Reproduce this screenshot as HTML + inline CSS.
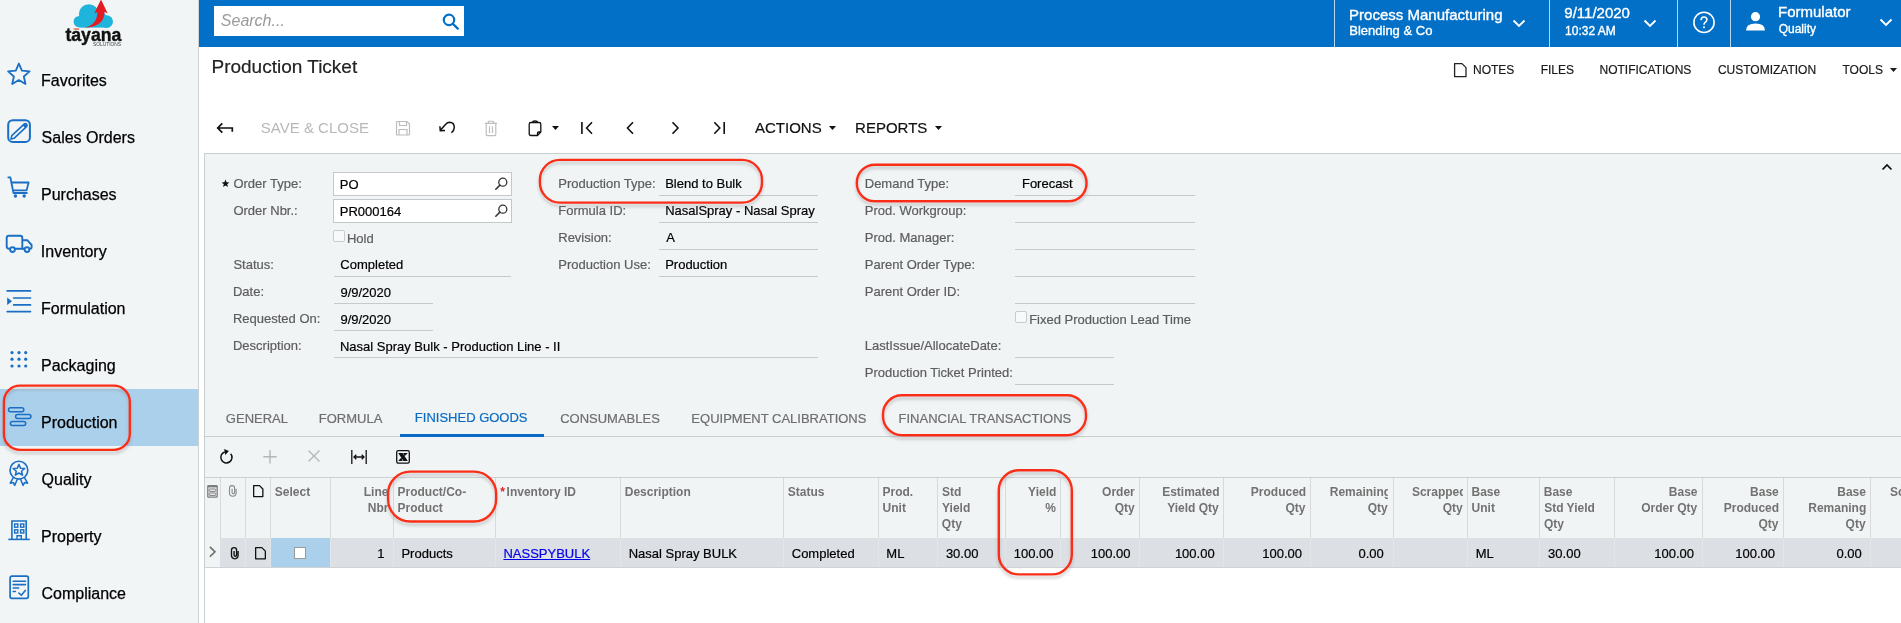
<!DOCTYPE html><html><head><meta charset="utf-8"><style>
html,body{margin:0;padding:0;}
body{width:1901px;height:623px;overflow:hidden;position:relative;background:#fff;font-family:"Liberation Sans",sans-serif;}
.t{position:absolute;white-space:nowrap;line-height:1;}
svg{overflow:visible}
</style></head><body>
<div id="root" style="position:absolute;left:0;top:0;width:1901px;height:623px;will-change:transform"><div style="position:absolute;left:0px;top:0px;width:198px;height:623px;background:#f2f5f6;"></div>
<div style="position:absolute;left:198px;top:0px;width:1px;height:623px;background:#cdd2d5;"></div>
<div style="position:absolute;left:0px;top:389px;width:198px;height:57px;background:#abd0ec;"></div>
<div class="t" style="top:72.96px;font-size:16px;color:#000;left:41.02px;-webkit-text-stroke:0.25px #000;">Favorites</div>
<div class="t" style="top:129.96px;font-size:16px;color:#000;left:41.58px;-webkit-text-stroke:0.25px #000;">Sales Orders</div>
<div class="t" style="top:186.96px;font-size:16px;color:#000;left:41.02px;-webkit-text-stroke:0.25px #000;">Purchases</div>
<div class="t" style="top:243.96px;font-size:16px;color:#000;left:40.86px;-webkit-text-stroke:0.25px #000;">Inventory</div>
<div class="t" style="top:300.96px;font-size:16px;color:#000;left:41.02px;-webkit-text-stroke:0.25px #000;">Formulation</div>
<div class="t" style="top:357.96px;font-size:16px;color:#000;left:41.02px;-webkit-text-stroke:0.25px #000;">Packaging</div>
<div class="t" style="top:414.96px;font-size:16px;color:#000;left:41.02px;-webkit-text-stroke:0.25px #000;">Production</div>
<div class="t" style="top:471.96px;font-size:16px;color:#000;left:41.58px;-webkit-text-stroke:0.25px #000;">Quality</div>
<div class="t" style="top:528.96px;font-size:16px;color:#000;left:41.02px;-webkit-text-stroke:0.25px #000;">Property</div>
<div class="t" style="top:585.96px;font-size:16px;color:#000;left:41.50px;-webkit-text-stroke:0.25px #000;">Compliance</div>
<svg style="position:absolute;left:5px;top:60px" width="28" height="28" viewBox="0 0 28 28"><polygon points="13.85,3.55 16.91,10.64 24.60,11.36 18.80,16.46 20.49,23.99 13.85,20.05 7.21,23.99 8.90,16.46 3.10,11.36 10.79,10.64" fill="none" stroke="#1a6fc4" stroke-width="1.8" stroke-linejoin="round"/></svg>
<svg style="position:absolute;left:5px;top:117px" width="28" height="28" viewBox="0 0 28 28"><rect x="3.2" y="3.2" width="21.7" height="21.7" rx="4.5" fill="none" stroke="#1a6fc4" stroke-width="2"/><g transform="translate(-1.1,1.1)"><path d="M20.2 6.1 Q21.6 5 22.7 6.2 Q23.8 7.4 22.6 8.6 L10.4 20.1 L7 21 L7.9 17.5 Z" fill="none" stroke="#1a6fc4" stroke-width="1.6" stroke-linejoin="round"/><path d="M20.2 6.1 Q21.6 5 22.7 6.2 Q23.8 7.4 22.6 8.6 L21.2 9.9 L18.8 7.4 Z" fill="#1a6fc4"/></g></svg>
<svg style="position:absolute;left:5px;top:174px" width="28" height="28" viewBox="0 0 28 28"><path d="M2.6 3.3 H5.3 L8.5 19 H22.5" fill="none" stroke="#1a6fc4" stroke-width="1.8" stroke-linejoin="round"/><path d="M6.6 8.5 H23.6 L21.6 16.4 H8.2" fill="none" stroke="#1a6fc4" stroke-width="1.8" stroke-linejoin="round"/><circle cx="10.4" cy="22" r="1.7" fill="#1a6fc4"/><circle cx="19.2" cy="22" r="1.7" fill="#1a6fc4"/></svg>
<svg style="position:absolute;left:3px;top:232px" width="32" height="24" viewBox="0 0 32 24"><path d="M8 16.8 H6.2 Q3.7 16.8 3.7 14.3 V6 Q3.7 3.8 6 3.8 H17 Q19.3 3.8 19.3 6 V16.8 H10.8" fill="none" stroke="#1a6fc4" stroke-width="1.9"/><path d="M19.3 8.2 H24.3 L28.6 13 V15.3 Q28.6 16.8 27 16.8 H26.3 M19.3 16.8 H21.8" fill="none" stroke="#1a6fc4" stroke-width="1.9" stroke-linejoin="round"/><circle cx="9.5" cy="17.6" r="2.4" fill="#f2f5f6" stroke="#1a6fc4" stroke-width="1.9"/><circle cx="24" cy="17.6" r="2.4" fill="#f2f5f6" stroke="#1a6fc4" stroke-width="1.9"/></svg>
<svg style="position:absolute;left:5px;top:286px" width="28" height="30" viewBox="0 0 28 30"><path d="M2.2 4.9 H25.5 M8.7 12 H25.5 M8.7 18.9 H25.5 M2.2 25.6 H25.5" stroke="#1a6fc4" stroke-width="1.7" stroke-linecap="round"/><polygon points="2.2,11.5 7,15.3 2.2,19.1" fill="#1a6fc4"/></svg>
<svg style="position:absolute;left:5px;top:348px" width="28" height="24" viewBox="0 0 28 24"><circle cx="7" cy="4.6" r="1.6" fill="#1a6fc4"/><circle cx="7" cy="11.2" r="1.6" fill="#1a6fc4"/><circle cx="7" cy="18" r="1.6" fill="#1a6fc4"/><circle cx="14" cy="4.6" r="1.6" fill="#1a6fc4"/><circle cx="14" cy="11.2" r="1.6" fill="#1a6fc4"/><circle cx="14" cy="18" r="1.6" fill="#1a6fc4"/><circle cx="20.7" cy="4.6" r="1.6" fill="#1a6fc4"/><circle cx="20.7" cy="11.2" r="1.6" fill="#1a6fc4"/><circle cx="20.7" cy="18" r="1.6" fill="#1a6fc4"/></svg>
<svg style="position:absolute;left:5px;top:404px" width="30" height="26" viewBox="0 0 30 26"><rect x="3.5" y="3.8" width="15.3" height="3.9" rx="1.95" fill="none" stroke="#1a6fc4" stroke-width="1.5"/><rect x="10.6" y="10.5" width="15.3" height="3.9" rx="1.95" fill="none" stroke="#1a6fc4" stroke-width="1.5"/><rect x="5.4" y="17.6" width="15.3" height="3.9" rx="1.95" fill="none" stroke="#1a6fc4" stroke-width="1.5"/></svg>
<svg style="position:absolute;left:5px;top:457px" width="28" height="32" viewBox="0 0 28 32"><circle cx="13.9" cy="13.2" r="8.9" fill="none" stroke="#1a6fc4" stroke-width="1.6"/><polygon points="13.9,7.4 15.5,11.3 19.7,11.5 16.5,14.2 17.5,18.2 13.9,16 10.3,18.2 11.3,14.2 8.1,11.5 12.3,11.3" fill="none" stroke="#1a6fc4" stroke-width="1.5" stroke-linejoin="round"/><path d="M8.6 20.2 L5.2 26.2 L8.3 25.6 L9.7 28.4 L12.3 22.2 M19.2 20.2 L22.6 26.2 L19.5 25.6 L18.1 28.4 L15.5 22.2" fill="none" stroke="#1a6fc4" stroke-width="1.5" stroke-linejoin="round"/></svg>
<svg style="position:absolute;left:5px;top:516px" width="28" height="28" viewBox="0 0 28 28"><path d="M6.9 23.3 V5 H21.2 V23.3" fill="none" stroke="#1a6fc4" stroke-width="1.6"/><path d="M3.3 23.4 H24.8" stroke="#1a6fc4" stroke-width="1.6"/><rect x="9.6" y="8" width="3.2" height="3.2" fill="none" stroke="#1a6fc4" stroke-width="1.4"/><rect x="15.6" y="8" width="3.2" height="3.2" fill="none" stroke="#1a6fc4" stroke-width="1.4"/><rect x="9.6" y="13.8" width="3.2" height="3.2" fill="none" stroke="#1a6fc4" stroke-width="1.4"/><rect x="15.6" y="13.8" width="3.2" height="3.2" fill="none" stroke="#1a6fc4" stroke-width="1.4"/><path d="M12 23.3 V19.7 H16.3 V23.3" fill="none" stroke="#1a6fc4" stroke-width="1.4"/></svg>
<svg style="position:absolute;left:5px;top:572px" width="28" height="30" viewBox="0 0 28 30"><rect x="5.1" y="4.1" width="18.2" height="22.2" rx="1.8" fill="none" stroke="#1a6fc4" stroke-width="1.7"/><path d="M8.2 9.3 H20.5 M8.2 12.6 H20.5 M8.2 16 H13.6 M8.2 19.5 H10.4" stroke="#1a6fc4" stroke-width="1.6" stroke-linecap="round"/><path d="M13.8 21 L16.3 23.2 L20.3 18.4" fill="none" stroke="#1a6fc4" stroke-width="1.6" stroke-linecap="round" stroke-linejoin="round"/></svg>
<svg style="position:absolute;left:60px;top:0px" width="70" height="48" viewBox="0 0 70 48">
<g fill="#1fb4dc"><circle cx="28.8" cy="14.1" r="9.9"/><circle cx="19.3" cy="21.6" r="5.7"/><circle cx="46.7" cy="21.6" r="6.3"/><circle cx="39" cy="17.5" r="7"/><rect x="19.3" y="15.6" width="27.4" height="12"/></g>
<path d="M41 -0.5 L47.6 13.2 L44.4 12 Q45 26.5 24.2 27.9 Q37.2 24.8 37.4 12.2 L34.4 12.9 Z" fill="#e31b23"/>
<rect x="13.7" y="28.4" width="5.4" height="1.3" fill="#e0523a"/>
<text x="5.4" y="41.2" font-family="Liberation Sans" font-weight="bold" font-size="18.3" textLength="56" lengthAdjust="spacingAndGlyphs" fill="#111" stroke="#111" stroke-width="0.4">tayana</text>
<text x="33" y="45.5" font-family="Liberation Sans" font-size="4.6" textLength="28" lengthAdjust="spacingAndGlyphs" fill="#444">SOLUTIONS</text>
</svg>
<div style="position:absolute;left:199px;top:0px;width:1702px;height:47px;background:#0370c8;"></div>
<div style="position:absolute;left:214px;top:6px;width:250px;height:30px;background:#fff;"></div>
<div class="t" style="top:12.96px;font-size:16px;color:#9a9a9a;font-style:italic;left:220.82px;">Search...</div>
<svg style="position:absolute;left:441px;top:12px" width="22" height="22" viewBox="0 0 22 22"><circle cx="8" cy="7.9" r="5.2" fill="none" stroke="#0370c8" stroke-width="2.2"/><path d="M11.8 11.7 L16.8 16.6" stroke="#0370c8" stroke-width="2.3" stroke-linecap="round"/></svg>
<div style="position:absolute;left:1334px;top:0px;width:1px;height:47px;background:#b9d4ef;"></div>
<div style="position:absolute;left:1549px;top:0px;width:1px;height:47px;background:#b9d4ef;"></div>
<div style="position:absolute;left:1677px;top:0px;width:1px;height:47px;background:#b9d4ef;"></div>
<div style="position:absolute;left:1730px;top:0px;width:1px;height:47px;background:#b9d4ef;"></div>
<div class="t" style="top:6.90px;font-size:15px;color:#fff;left:1349.10px;-webkit-text-stroke:0.35px #fff;">Process Manufacturing</div>
<div class="t" style="top:24.10px;font-size:13px;color:#fff;left:1349.26px;-webkit-text-stroke:0.35px #fff;">Blending &amp; Co</div>
<svg style="position:absolute;left:1511.5px;top:19px" width="15" height="10" viewBox="0 0 15 10"><path d="M1.5 1.5 L7 7 L12.5 1.5" fill="none" stroke="#fff" stroke-width="1.9"/></svg>
<div class="t" style="top:5.20px;font-size:15px;color:#fff;left:1564.33px;-webkit-text-stroke:0.35px #fff;">9/11/2020</div>
<div class="t" style="top:24.54px;font-size:12px;color:#fff;left:1565.10px;-webkit-text-stroke:0.35px #fff;">10:32 AM</div>
<svg style="position:absolute;left:1643px;top:19px" width="15" height="10" viewBox="0 0 15 10"><path d="M1.5 1.5 L7 7 L12.5 1.5" fill="none" stroke="#fff" stroke-width="1.9"/></svg>
<svg style="position:absolute;left:1692px;top:11px" width="24" height="24" viewBox="0 0 24 24"><circle cx="12" cy="11.4" r="10.1" fill="none" stroke="#fff" stroke-width="1.6"/><path d="M9.1 9.2 Q9.1 6 12 6 Q14.9 6 14.9 8.8 Q14.9 10.4 13.2 11.4 Q12 12.1 12 13.8" fill="none" stroke="#fff" stroke-width="1.6"/><circle cx="12" cy="16.3" r="1" fill="#fff"/></svg>
<svg style="position:absolute;left:1744px;top:10px" width="24" height="24" viewBox="0 0 24 24"><circle cx="11.5" cy="6.7" r="4.6" fill="#fff"/><path d="M2 20.4 Q2 13.6 11.5 13.6 Q21 13.6 21 20.4 Z" fill="#fff"/></svg>
<div class="t" style="top:4.00px;font-size:15px;color:#fff;left:1778.00px;-webkit-text-stroke:0.35px #fff;">Formulator</div>
<div class="t" style="top:23.14px;font-size:12px;color:#fff;left:1778.66px;-webkit-text-stroke:0.35px #fff;">Quality</div>
<svg style="position:absolute;left:1879px;top:18px" width="15" height="10" viewBox="0 0 15 10"><path d="M1.5 1.5 L7 7 L12.5 1.5" fill="none" stroke="#fff" stroke-width="1.9"/></svg>
<div class="t" style="top:56.82px;font-size:19px;color:#222;-webkit-text-stroke:0.2px #222;left:211.48px;">Production Ticket</div>
<svg style="position:absolute;left:1452px;top:61px" width="17" height="18" viewBox="0 0 17 18"><path d="M2.6 2.6 H10 L14 6.6 V15.7 H2.6 Z" fill="none" stroke="#222" stroke-width="1.3" stroke-linejoin="round"/></svg>
<div class="t" style="top:63.74px;font-size:12px;color:#1a1a1a;-webkit-text-stroke:0.2px #1a1a1a;left:1473.04px;">NOTES</div>
<div class="t" style="top:63.74px;font-size:12px;color:#1a1a1a;-webkit-text-stroke:0.2px #1a1a1a;left:1540.64px;">FILES</div>
<div class="t" style="top:63.74px;font-size:12px;color:#1a1a1a;-webkit-text-stroke:0.2px #1a1a1a;left:1599.54px;">NOTIFICATIONS</div>
<div class="t" style="top:63.74px;font-size:12px;color:#1a1a1a;-webkit-text-stroke:0.2px #1a1a1a;left:1717.90px;">CUSTOMIZATION</div>
<div class="t" style="top:63.74px;font-size:12px;color:#1a1a1a;-webkit-text-stroke:0.2px #1a1a1a;left:1842.46px;">TOOLS</div>
<svg style="position:absolute;left:1890px;top:68px" width="8" height="5" viewBox="0 0 8 5"><polygon points="0,0 7,0 3.5,4" fill="#1a1a1a"/></svg>
<svg style="position:absolute;left:215px;top:120px" width="20" height="16" viewBox="0 0 20 16"><path d="M2.8 8 H17.3 V11.8 M7.3 3.4 L2.7 8 L7.3 12.6" fill="none" stroke="#111" stroke-width="1.7"/></svg>
<div class="t" style="top:120.20px;font-size:15px;color:#b8b8b8;left:260.82px;">SAVE &amp; CLOSE</div>
<svg style="position:absolute;left:394px;top:119px" width="18" height="18" viewBox="0 0 18 18"><path d="M2.5 3.5 Q2.5 2.5 3.5 2.5 H13 L15.5 5 V15 Q15.5 16 14.5 16 H3.5 Q2.5 16 2.5 15 Z" fill="none" stroke="#bdbdbd" stroke-width="1.2"/><path d="M5.5 2.5 V6.5 H12.5 V2.5 M5 16 V10.5 H13 V16" fill="none" stroke="#bdbdbd" stroke-width="1.2"/></svg>
<svg style="position:absolute;left:437px;top:119px" width="20" height="17" viewBox="0 0 20 17"><path d="M2.9 7.2 L3.3 11.6 L8 11.4" fill="none" stroke="#111" stroke-width="1.5" stroke-linejoin="miter"/><path d="M3.6 11 L8.5 5.4 Q10.5 3.3 12.5 3.3 Q17.3 3.5 17.3 8.5 Q17.3 11.3 14.4 13.8" fill="none" stroke="#111" stroke-width="1.5"/></svg>
<svg style="position:absolute;left:483px;top:119px" width="16" height="19" viewBox="0 0 16 19"><path d="M2 4.4 H14 M5.3 4.4 V2.6 Q5.3 2.2 5.8 2.2 H10.2 Q10.7 2.2 10.7 2.6 V4.4 M3.2 4.4 V15.6 Q3.2 16.6 4.2 16.6 H11.8 Q12.8 16.6 12.8 15.6 V4.4 M6.5 7.3 V14 M9.5 7.3 V14" fill="none" stroke="#bdbdbd" stroke-width="1.15"/></svg>
<svg style="position:absolute;left:527px;top:119px" width="16" height="19" viewBox="0 0 16 19"><path d="M4 3.5 H12 Q13.8 3.5 13.8 5.3 V13 L10.5 16.5 H4 Q2.2 16.5 2.2 14.7 V5.3 Q2.2 3.5 4 3.5 Z M5.5 3.5 Q5.5 1.8 8 1.8 Q10.5 1.8 10.5 3.5 M13.8 13 H11.5 Q10.5 13 10.5 14 V16.5" fill="none" stroke="#111" stroke-width="1.3" stroke-linejoin="round"/></svg>
<svg style="position:absolute;left:552px;top:126px" width="8" height="5" viewBox="0 0 8 5"><polygon points="0,0 7,0 3.5,4" fill="#111"/></svg>
<svg style="position:absolute;left:579px;top:120px" width="16" height="16" viewBox="0 0 16 16"><path d="M2.9 2 V14 M13 2.2 L7.6 8 L13 13.8" fill="none" stroke="#111" stroke-width="1.6"/></svg>
<svg style="position:absolute;left:624px;top:120px" width="12" height="16" viewBox="0 0 12 16"><path d="M9 2.2 L3.5 8 L9 13.8" fill="none" stroke="#111" stroke-width="1.6"/></svg>
<svg style="position:absolute;left:669px;top:120px" width="12" height="16" viewBox="0 0 12 16"><path d="M3.5 2.2 L9 8 L3.5 13.8" fill="none" stroke="#111" stroke-width="1.6"/></svg>
<svg style="position:absolute;left:712px;top:120px" width="16" height="16" viewBox="0 0 16 16"><path d="M12.2 2 V14 M2.3 2.2 L7.8 8 L2.3 13.8" fill="none" stroke="#111" stroke-width="1.6"/></svg>
<div class="t" style="top:120.10px;font-size:15px;color:#111;-webkit-text-stroke:0.2px #111;left:755.00px;">ACTIONS</div>
<svg style="position:absolute;left:829px;top:126px" width="8" height="5" viewBox="0 0 8 5"><polygon points="0,0 7,0 3.5,4" fill="#111"/></svg>
<div class="t" style="top:120.10px;font-size:15px;color:#111;-webkit-text-stroke:0.2px #111;left:855.10px;">REPORTS</div>
<svg style="position:absolute;left:935px;top:126px" width="8" height="5" viewBox="0 0 8 5"><polygon points="0,0 7,0 3.5,4" fill="#111"/></svg>
<div style="position:absolute;left:204px;top:153px;width:1697px;height:470px;background:#f1f4f5;border-top:1px solid #c9ced1;border-left:1px solid #c9ced1;box-sizing:border-box;"></div>
<svg style="position:absolute;left:1879px;top:161px" width="16" height="12" viewBox="0 0 16 12"><path d="M3.5 8.5 L8 4 L12.5 8.5" fill="none" stroke="#111" stroke-width="1.75"/></svg>
<svg style="position:absolute;left:221px;top:179px" width="9" height="9" viewBox="0 0 9 9"><polygon points="4.5,0.6 5.6,3.3 8.4,3.4 6.2,5.2 7,7.9 4.5,6.4 2,7.9 2.8,5.2 0.6,3.4 3.4,3.3" fill="#111"/></svg>
<div class="t" style="top:177.20px;font-size:13px;color:#5d5d5d;-webkit-text-stroke:0.2px #5d5d5d;left:233.41px;">Order Type:</div>
<div class="t" style="top:204.20px;font-size:13px;color:#5d5d5d;-webkit-text-stroke:0.2px #5d5d5d;left:233.41px;">Order Nbr.:</div>
<div class="t" style="top:258.00px;font-size:13px;color:#5d5d5d;-webkit-text-stroke:0.2px #5d5d5d;left:233.41px;">Status:</div>
<div class="t" style="top:285.00px;font-size:13px;color:#5d5d5d;-webkit-text-stroke:0.2px #5d5d5d;left:232.96px;">Date:</div>
<div class="t" style="top:312.00px;font-size:13px;color:#5d5d5d;-webkit-text-stroke:0.2px #5d5d5d;left:232.96px;">Requested On:</div>
<div class="t" style="top:339.00px;font-size:13px;color:#5d5d5d;-webkit-text-stroke:0.2px #5d5d5d;left:232.96px;">Description:</div>
<div style="position:absolute;left:333px;top:172px;width:179px;height:24px;background:#fff;border:1px solid #c5c8ca;box-sizing:border-box;"></div>
<div style="position:absolute;left:333px;top:199px;width:179px;height:24px;background:#fff;border:1px solid #c5c8ca;box-sizing:border-box;"></div>
<svg style="position:absolute;left:493px;top:176px" width="16" height="16" viewBox="0 0 16 16"><circle cx="9.8" cy="6.2" r="4" fill="none" stroke="#333" stroke-width="1.3"/><path d="M6.9 9.1 L2.8 13.2" stroke="#333" stroke-width="1.5" stroke-linecap="round"/></svg>
<svg style="position:absolute;left:493px;top:203px" width="16" height="16" viewBox="0 0 16 16"><circle cx="9.8" cy="6.2" r="4" fill="none" stroke="#333" stroke-width="1.3"/><path d="M6.9 9.1 L2.8 13.2" stroke="#333" stroke-width="1.5" stroke-linecap="round"/></svg>
<div class="t" style="top:177.50px;font-size:13px;color:#000;-webkit-text-stroke:0.2px #000;left:339.76px;">PO</div>
<div class="t" style="top:204.50px;font-size:13px;color:#000;-webkit-text-stroke:0.2px #000;left:339.76px;">PR000164</div>
<div style="position:absolute;left:333px;top:230px;width:12px;height:12px;background:#f8f9fa;border:1px solid #c9cccf;border-radius:2px;box-sizing:border-box;"></div>
<div class="t" style="top:231.80px;font-size:13px;color:#5d5d5d;-webkit-text-stroke:0.2px #5d5d5d;left:346.96px;">Hold</div>
<div class="t" style="top:258.10px;font-size:13px;color:#000;-webkit-text-stroke:0.2px #000;left:340.35px;">Completed</div>
<div class="t" style="top:286.00px;font-size:13px;color:#000;-webkit-text-stroke:0.2px #000;left:340.42px;">9/9/2020</div>
<div class="t" style="top:313.00px;font-size:13px;color:#000;-webkit-text-stroke:0.2px #000;left:340.42px;">9/9/2020</div>
<div class="t" style="top:340.00px;font-size:13px;color:#000;-webkit-text-stroke:0.2px #000;left:339.96px;">Nasal Spray Bulk - Production Line - II</div>
<div style="position:absolute;left:334px;top:276px;width:177px;height:1px;background:#c6cacd;"></div>
<div style="position:absolute;left:334px;top:303px;width:99px;height:1px;background:#c6cacd;"></div>
<div style="position:absolute;left:334px;top:330px;width:99px;height:1px;background:#c6cacd;"></div>
<div style="position:absolute;left:334px;top:357px;width:484px;height:1px;background:#c6cacd;"></div>
<div class="t" style="top:177.10px;font-size:13px;color:#5d5d5d;-webkit-text-stroke:0.2px #5d5d5d;left:558.26px;">Production Type:</div>
<div class="t" style="top:204.10px;font-size:13px;color:#5d5d5d;-webkit-text-stroke:0.2px #5d5d5d;left:558.26px;">Formula ID:</div>
<div class="t" style="top:231.10px;font-size:13px;color:#5d5d5d;-webkit-text-stroke:0.2px #5d5d5d;left:558.26px;">Revision:</div>
<div class="t" style="top:258.10px;font-size:13px;color:#5d5d5d;-webkit-text-stroke:0.2px #5d5d5d;left:558.26px;">Production Use:</div>
<div class="t" style="top:177.10px;font-size:13px;color:#000;-webkit-text-stroke:0.2px #000;left:665.16px;">Blend to Bulk</div>
<div class="t" style="top:204.10px;font-size:13px;color:#000;-webkit-text-stroke:0.2px #000;left:665.16px;">NasalSpray - Nasal Spray</div>
<div class="t" style="top:231.30px;font-size:13px;color:#000;-webkit-text-stroke:0.2px #000;left:666.20px;">A</div>
<div class="t" style="top:258.10px;font-size:13px;color:#000;-webkit-text-stroke:0.2px #000;left:665.16px;">Production</div>
<div style="position:absolute;left:659px;top:195px;width:159px;height:1px;background:#c6cacd;"></div>
<div style="position:absolute;left:659px;top:222px;width:159px;height:1px;background:#c6cacd;"></div>
<div style="position:absolute;left:659px;top:249px;width:159px;height:1px;background:#c6cacd;"></div>
<div style="position:absolute;left:659px;top:276px;width:159px;height:1px;background:#c6cacd;"></div>
<div class="t" style="top:177.10px;font-size:13px;color:#5d5d5d;-webkit-text-stroke:0.2px #5d5d5d;left:864.76px;">Demand Type:</div>
<div class="t" style="top:204.10px;font-size:13px;color:#5d5d5d;-webkit-text-stroke:0.2px #5d5d5d;left:864.76px;">Prod. Workgroup:</div>
<div class="t" style="top:231.10px;font-size:13px;color:#5d5d5d;-webkit-text-stroke:0.2px #5d5d5d;left:864.76px;">Prod. Manager:</div>
<div class="t" style="top:258.10px;font-size:13px;color:#5d5d5d;-webkit-text-stroke:0.2px #5d5d5d;left:864.76px;">Parent Order Type:</div>
<div class="t" style="top:285.10px;font-size:13px;color:#5d5d5d;-webkit-text-stroke:0.2px #5d5d5d;left:864.76px;">Parent Order ID:</div>
<div class="t" style="top:339.10px;font-size:13px;color:#5d5d5d;-webkit-text-stroke:0.2px #5d5d5d;left:864.76px;">LastIssue/AllocateDate:</div>
<div class="t" style="top:366.10px;font-size:13px;color:#5d5d5d;-webkit-text-stroke:0.2px #5d5d5d;left:864.76px;">Production Ticket Printed:</div>
<div class="t" style="top:177.10px;font-size:13px;color:#000;-webkit-text-stroke:0.2px #000;left:1021.96px;">Forecast</div>
<div style="position:absolute;left:1015px;top:195px;width:180px;height:1px;background:#c6cacd;"></div>
<div style="position:absolute;left:1015px;top:222px;width:180px;height:1px;background:#c6cacd;"></div>
<div style="position:absolute;left:1015px;top:249px;width:180px;height:1px;background:#c6cacd;"></div>
<div style="position:absolute;left:1015px;top:276px;width:180px;height:1px;background:#c6cacd;"></div>
<div style="position:absolute;left:1015px;top:303px;width:180px;height:1px;background:#c6cacd;"></div>
<div style="position:absolute;left:1015px;top:357px;width:99px;height:1px;background:#c6cacd;"></div>
<div style="position:absolute;left:1015px;top:384px;width:99px;height:1px;background:#c6cacd;"></div>
<div style="position:absolute;left:1015px;top:311px;width:12px;height:12px;background:#f8f9fa;border:1px solid #c9cccf;border-radius:2px;box-sizing:border-box;"></div>
<div class="t" style="top:312.80px;font-size:13px;color:#5d5d5d;-webkit-text-stroke:0.2px #5d5d5d;left:1029.16px;">Fixed Production Lead Time</div>
<div style="position:absolute;left:205px;top:436px;width:1696px;height:1px;background:#c9ced1;"></div>
<div class="t" style="top:412.00px;font-size:13px;color:#6e6e6e;-webkit-text-stroke:0.2px #6e6e6e;left:225.85px;">GENERAL</div>
<div class="t" style="top:412.00px;font-size:13px;color:#6e6e6e;-webkit-text-stroke:0.2px #6e6e6e;left:318.76px;">FORMULA</div>
<div class="t" style="top:411.10px;font-size:13px;color:#0b6bc4;-webkit-text-stroke:0.2px #0b6bc4;left:414.86px;">FINISHED GOODS</div>
<div class="t" style="top:412.00px;font-size:13px;color:#6e6e6e;-webkit-text-stroke:0.2px #6e6e6e;left:560.15px;">CONSUMABLES</div>
<div class="t" style="top:412.00px;font-size:13px;color:#6e6e6e;-webkit-text-stroke:0.2px #6e6e6e;left:691.36px;">EQUIPMENT CALIBRATIONS</div>
<div class="t" style="top:412.00px;font-size:13px;color:#6e6e6e;-webkit-text-stroke:0.2px #6e6e6e;left:898.56px;">FINANCIAL TRANSACTIONS</div>
<div style="position:absolute;left:400px;top:434px;width:144px;height:3px;background:#0b6bc4;"></div>
<svg style="position:absolute;left:217px;top:447px" width="20" height="20" viewBox="0 0 20 20"><path d="M13.65 6.65 A5.6 5.6 0 1 1 7.76 4.94" fill="none" stroke="#111" stroke-width="1.5"/><polygon points="7.1,1.9 8.3,7.9 11.9,4.0" fill="#111"/></svg>
<svg style="position:absolute;left:261px;top:448px" width="18" height="18" viewBox="0 0 18 18"><path d="M9 2 V15.5 M2.3 8.7 H15.7" stroke="#b5b5b5" stroke-width="1.4"/></svg>
<svg style="position:absolute;left:306px;top:448px" width="16" height="16" viewBox="0 0 16 16"><path d="M2.5 2.5 L13.5 13.5 M13.5 2.5 L2.5 13.5" stroke="#b5b5b5" stroke-width="1.3"/></svg>
<svg style="position:absolute;left:349px;top:447px" width="20" height="20" viewBox="0 0 20 20"><path d="M2.8 3 V17 M17.2 3 V17 M5 10 H15 M7.3 7.7 L5 10 L7.3 12.3 M12.7 7.7 L15 10 L12.7 12.3" fill="none" stroke="#111" stroke-width="1.3"/></svg>
<svg style="position:absolute;left:394px;top:448px" width="18" height="18" viewBox="0 0 18 18"><rect x="2.7" y="2.6" width="12.6" height="12.6" rx="1.6" fill="none" stroke="#111" stroke-width="1.3"/><polygon points="4.2,5 8.6,5 13.8,12.9 9.4,12.9" fill="#111"/><polygon points="9.2,5 13.8,5 10.6,8.2" fill="#111"/><polygon points="4.2,12.9 8.6,12.9 7.3,9.6" fill="#111"/></svg>
<div style="position:absolute;left:205px;top:477px;width:1696px;height:1px;background:#cdd1d4;"></div>
<div style="position:absolute;left:205px;top:538px;width:1696px;height:30px;background:#dcdfe3;"></div>
<div style="position:absolute;left:205px;top:538px;width:15px;height:29px;background:#f1f4f5;"></div>
<div style="position:absolute;left:270px;top:538px;width:60px;height:29px;background:#abd0ec;"></div>
<div style="position:absolute;left:205px;top:567px;width:1696px;height:1px;background:#d0d3d6;"></div>
<div style="position:absolute;left:205px;top:568px;width:1696px;height:55px;background:#fff;"></div>
<div style="position:absolute;left:220px;top:478px;width:1px;height:60px;background:#d6dadd;"></div>
<div style="position:absolute;left:245px;top:478px;width:1px;height:60px;background:#d6dadd;"></div>
<div style="position:absolute;left:245px;top:538px;width:1px;height:29px;background:#e3e6e9;"></div>
<div style="position:absolute;left:270px;top:478px;width:1px;height:60px;background:#d6dadd;"></div>
<div style="position:absolute;left:270px;top:538px;width:1px;height:29px;background:#e3e6e9;"></div>
<div style="position:absolute;left:330px;top:478px;width:1px;height:60px;background:#d6dadd;"></div>
<div style="position:absolute;left:330px;top:538px;width:1px;height:29px;background:#e3e6e9;"></div>
<div style="position:absolute;left:393px;top:478px;width:1px;height:60px;background:#d6dadd;"></div>
<div style="position:absolute;left:393px;top:538px;width:1px;height:29px;background:#e3e6e9;"></div>
<div style="position:absolute;left:495px;top:478px;width:1px;height:60px;background:#d6dadd;"></div>
<div style="position:absolute;left:495px;top:538px;width:1px;height:29px;background:#e3e6e9;"></div>
<div style="position:absolute;left:620px;top:478px;width:1px;height:60px;background:#d6dadd;"></div>
<div style="position:absolute;left:620px;top:538px;width:1px;height:29px;background:#e3e6e9;"></div>
<div style="position:absolute;left:783px;top:478px;width:1px;height:60px;background:#d6dadd;"></div>
<div style="position:absolute;left:783px;top:538px;width:1px;height:29px;background:#e3e6e9;"></div>
<div style="position:absolute;left:878px;top:478px;width:1px;height:60px;background:#d6dadd;"></div>
<div style="position:absolute;left:878px;top:538px;width:1px;height:29px;background:#e3e6e9;"></div>
<div style="position:absolute;left:937px;top:478px;width:1px;height:60px;background:#d6dadd;"></div>
<div style="position:absolute;left:937px;top:538px;width:1px;height:29px;background:#e3e6e9;"></div>
<div style="position:absolute;left:1005px;top:478px;width:1px;height:60px;background:#d6dadd;"></div>
<div style="position:absolute;left:1005px;top:538px;width:1px;height:29px;background:#e3e6e9;"></div>
<div style="position:absolute;left:1060px;top:478px;width:1px;height:60px;background:#d6dadd;"></div>
<div style="position:absolute;left:1060px;top:538px;width:1px;height:29px;background:#e3e6e9;"></div>
<div style="position:absolute;left:1139px;top:478px;width:1px;height:60px;background:#d6dadd;"></div>
<div style="position:absolute;left:1139px;top:538px;width:1px;height:29px;background:#e3e6e9;"></div>
<div style="position:absolute;left:1223px;top:478px;width:1px;height:60px;background:#d6dadd;"></div>
<div style="position:absolute;left:1223px;top:538px;width:1px;height:29px;background:#e3e6e9;"></div>
<div style="position:absolute;left:1310px;top:478px;width:1px;height:60px;background:#d6dadd;"></div>
<div style="position:absolute;left:1310px;top:538px;width:1px;height:29px;background:#e3e6e9;"></div>
<div style="position:absolute;left:1393px;top:478px;width:1px;height:60px;background:#d6dadd;"></div>
<div style="position:absolute;left:1393px;top:538px;width:1px;height:29px;background:#e3e6e9;"></div>
<div style="position:absolute;left:1467px;top:478px;width:1px;height:60px;background:#d6dadd;"></div>
<div style="position:absolute;left:1467px;top:538px;width:1px;height:29px;background:#e3e6e9;"></div>
<div style="position:absolute;left:1539px;top:478px;width:1px;height:60px;background:#d6dadd;"></div>
<div style="position:absolute;left:1539px;top:538px;width:1px;height:29px;background:#e3e6e9;"></div>
<div style="position:absolute;left:1614px;top:478px;width:1px;height:60px;background:#d6dadd;"></div>
<div style="position:absolute;left:1614px;top:538px;width:1px;height:29px;background:#e3e6e9;"></div>
<div style="position:absolute;left:1702px;top:478px;width:1px;height:60px;background:#d6dadd;"></div>
<div style="position:absolute;left:1702px;top:538px;width:1px;height:29px;background:#e3e6e9;"></div>
<div style="position:absolute;left:1783px;top:478px;width:1px;height:60px;background:#d6dadd;"></div>
<div style="position:absolute;left:1783px;top:538px;width:1px;height:29px;background:#e3e6e9;"></div>
<div style="position:absolute;left:1870px;top:478px;width:1px;height:60px;background:#d6dadd;"></div>
<div style="position:absolute;left:1870px;top:538px;width:1px;height:29px;background:#e3e6e9;"></div>
<div class="t" style="top:486.34px;font-size:12px;color:#727272;font-weight:bold;left:274.84px;">Select</div>
<div class="t" style="top:486.34px;font-size:12px;color:#727272;font-weight:bold;left:397.52px;">Product/Co-</div>
<div class="t" style="top:502.34px;font-size:12px;color:#727272;font-weight:bold;left:397.52px;">Product</div>
<div class="t" style="top:485.84px;font-size:12px;color:#e02020;font-weight:bold;left:500.14px;">*</div>
<div class="t" style="top:486.34px;font-size:12px;color:#727272;font-weight:bold;left:506.62px;">Inventory ID</div>
<div class="t" style="top:486.34px;font-size:12px;color:#727272;font-weight:bold;left:624.72px;">Description</div>
<div class="t" style="top:486.34px;font-size:12px;color:#727272;font-weight:bold;left:787.84px;">Status</div>
<div class="t" style="top:486.34px;font-size:12px;color:#727272;font-weight:bold;left:882.52px;">Prod.</div>
<div class="t" style="top:502.34px;font-size:12px;color:#727272;font-weight:bold;left:882.58px;">Unit</div>
<div class="t" style="top:486.34px;font-size:12px;color:#727272;font-weight:bold;left:941.94px;">Std</div>
<div class="t" style="top:502.34px;font-size:12px;color:#727272;font-weight:bold;left:942.06px;">Yield</div>
<div class="t" style="top:518.34px;font-size:12px;color:#727272;font-weight:bold;left:941.82px;">Qty</div>
<div class="t" style="top:486.34px;font-size:12px;color:#727272;font-weight:bold;right:844.69px;">Yield</div>
<div class="t" style="top:502.34px;font-size:12px;color:#727272;font-weight:bold;right:845.21px;">%</div>
<div class="t" style="top:486.34px;font-size:12px;color:#727272;font-weight:bold;right:766.24px;">Order</div>
<div class="t" style="top:502.34px;font-size:12px;color:#727272;font-weight:bold;right:766.32px;">Qty</div>
<div class="t" style="top:486.34px;font-size:12px;color:#727272;font-weight:bold;right:681.53px;">Estimated</div>
<div class="t" style="top:502.34px;font-size:12px;color:#727272;font-weight:bold;right:682.21px;">Yield Qty</div>
<div class="t" style="top:486.34px;font-size:12px;color:#727272;font-weight:bold;right:594.80px;">Produced</div>
<div class="t" style="top:502.34px;font-size:12px;color:#727272;font-weight:bold;right:595.52px;">Qty</div>
<div class="t" style="top:486.34px;font-size:12px;color:#727272;font-weight:bold;left:1471.52px;">Base</div>
<div class="t" style="top:502.34px;font-size:12px;color:#727272;font-weight:bold;left:1471.58px;">Unit</div>
<div class="t" style="top:486.34px;font-size:12px;color:#727272;font-weight:bold;left:1543.72px;">Base</div>
<div class="t" style="top:502.34px;font-size:12px;color:#727272;font-weight:bold;left:1544.14px;">Std Yield</div>
<div class="t" style="top:518.34px;font-size:12px;color:#727272;font-weight:bold;left:1544.02px;">Qty</div>
<div class="t" style="top:486.34px;font-size:12px;color:#727272;font-weight:bold;right:203.47px;">Base</div>
<div class="t" style="top:502.34px;font-size:12px;color:#727272;font-weight:bold;right:203.80px;">Order Qty</div>
<div class="t" style="top:486.34px;font-size:12px;color:#727272;font-weight:bold;right:122.27px;">Base</div>
<div class="t" style="top:502.34px;font-size:12px;color:#727272;font-weight:bold;right:121.90px;">Produced</div>
<div class="t" style="top:518.34px;font-size:12px;color:#727272;font-weight:bold;right:122.62px;">Qty</div>
<div class="t" style="top:486.34px;font-size:12px;color:#727272;font-weight:bold;right:35.07px;">Base</div>
<div class="t" style="top:502.34px;font-size:12px;color:#727272;font-weight:bold;right:34.73px;">Remaning</div>
<div class="t" style="top:518.34px;font-size:12px;color:#727272;font-weight:bold;right:35.42px;">Qty</div>
<div class="t" style="top:486.34px;font-size:12px;color:#727272;font-weight:bold;left:1889.94px;">Sc</div>
<div style="position:absolute;left:331px;top:478px;width:57.5px;height:60px;overflow:hidden">
<div class="t" style="top:8.34px;font-size:12px;color:#727272;font-weight:bold;left:32.72px;">Line</div>
<div class="t" style="top:24.34px;font-size:12px;color:#727272;font-weight:bold;left:36.82px;">Nbr</div>
</div>
<div style="position:absolute;left:1311px;top:478px;width:77px;height:60px;overflow:hidden">
<div class="t" style="top:8.34px;font-size:12px;color:#727272;font-weight:bold;left:18.72px;">Remaining</div>
<div class="t" style="top:24.34px;font-size:12px;color:#727272;font-weight:bold;right:0.22px;">Qty</div>
</div>
<div style="position:absolute;left:1394px;top:478px;width:69px;height:60px;overflow:hidden">
<div class="t" style="top:8.34px;font-size:12px;color:#727272;font-weight:bold;left:17.94px;">Scrapped</div>
<div class="t" style="top:24.34px;font-size:12px;color:#727272;font-weight:bold;right:0.22px;">Qty</div>
</div>
<svg style="position:absolute;left:205px;top:545px" width="14" height="14" viewBox="0 0 14 14"><path d="M4.9 1.9 L10 6.8 L4.9 11.7" fill="none" stroke="#707070" stroke-width="1.6"/></svg>
<svg style="position:absolute;left:227.9px;top:484px" width="10.4" height="13.9" viewBox="0 0 10.4 13.9"><path d="M8.4 4.6 V9.4 A3.7 3.7 0 0 1 1 9.4 V4 A2.85 2.85 0 0 1 6.7 4 V9 A1.4 1.4 0 0 1 3.9 9 V4.6" transform="translate(0.60,0.60) scale(0.894,0.888)" fill="none" stroke="#8a8a8a" stroke-width="1.1" vector-effect="non-scaling-stroke"/></svg>
<svg style="position:absolute;left:251.9px;top:483.7px" width="12.5" height="14.2" viewBox="0 0 12.5 14.2"><path d="M1.65 1.65 H7.51 L10.85 5.03 V12.55 H1.65 Z" fill="none" stroke="#111" stroke-width="1.3" stroke-linejoin="round"/></svg>
<svg style="position:absolute;left:206px;top:484px" width="13" height="15" viewBox="0 0 13 15"><rect x="1.8" y="1.6" width="9.4" height="11.6" rx="0.8" fill="none" stroke="#7d7d7d" stroke-width="1.3"/><rect x="3.3" y="5" width="6.4" height="2.4" rx="0.6" fill="none" stroke="#7d7d7d" stroke-width="1"/><rect x="3.3" y="9" width="6.4" height="2.4" rx="0.6" fill="none" stroke="#7d7d7d" stroke-width="1"/><path d="M1.8 2.6 H11.2" stroke="#7d7d7d" stroke-width="1.6"/></svg>
<svg style="position:absolute;left:229.5px;top:545.5px" width="10.4" height="14.5" viewBox="0 0 10.4 14.5"><path d="M8.4 4.6 V9.4 A3.7 3.7 0 0 1 1 9.4 V4 A2.85 2.85 0 0 1 6.7 4 V9 A1.4 1.4 0 0 1 3.9 9 V4.6" transform="translate(0.60,0.60) scale(0.894,0.933)" fill="none" stroke="#111" stroke-width="1.35" vector-effect="non-scaling-stroke"/></svg>
<svg style="position:absolute;left:253.6px;top:545.5px" width="13" height="14.5" viewBox="0 0 13 14.5"><path d="M1.65 1.65 H7.82 L11.35 5.12 V12.85 H1.65 Z" fill="none" stroke="#111" stroke-width="1.3" stroke-linejoin="round"/></svg>
<div style="position:absolute;left:294px;top:547px;width:12px;height:12px;background:#fff;border:1px solid #9a9a9a;box-sizing:border-box;"></div>
<div class="t" style="top:547.30px;font-size:13px;color:#000;-webkit-text-stroke:0.2px #000;right:1516.60px;">1</div>
<div class="t" style="top:547.30px;font-size:13px;color:#000;-webkit-text-stroke:0.2px #000;left:401.46px;">Products</div>
<div class="t" style="top:547.30px;font-size:13px;color:#0000ee;-webkit-text-stroke:0.2px #0000ee;left:503.46px;text-decoration:underline;">NASSPYBULK</div>
<div class="t" style="top:547.30px;font-size:13px;color:#000;-webkit-text-stroke:0.2px #000;left:628.66px;">Nasal Spray BULK</div>
<div class="t" style="top:547.30px;font-size:13px;color:#000;-webkit-text-stroke:0.2px #000;left:791.75px;">Completed</div>
<div class="t" style="top:547.30px;font-size:13px;color:#000;-webkit-text-stroke:0.2px #000;left:886.36px;">ML</div>
<div class="t" style="top:547.30px;font-size:13px;color:#000;-webkit-text-stroke:0.2px #000;left:945.88px;">30.00</div>
<div class="t" style="top:547.30px;font-size:13px;color:#000;-webkit-text-stroke:0.2px #000;right:847.56px;">100.00</div>
<div class="t" style="top:547.30px;font-size:13px;color:#000;-webkit-text-stroke:0.2px #000;right:770.46px;">100.00</div>
<div class="t" style="top:547.30px;font-size:13px;color:#000;-webkit-text-stroke:0.2px #000;right:686.36px;">100.00</div>
<div class="t" style="top:547.30px;font-size:13px;color:#000;-webkit-text-stroke:0.2px #000;right:599.06px;">100.00</div>
<div class="t" style="top:547.30px;font-size:13px;color:#000;-webkit-text-stroke:0.2px #000;right:517.23px;">0.00</div>
<div class="t" style="top:547.30px;font-size:13px;color:#000;-webkit-text-stroke:0.2px #000;right:207.06px;">100.00</div>
<div class="t" style="top:547.30px;font-size:13px;color:#000;-webkit-text-stroke:0.2px #000;right:126.06px;">100.00</div>
<div class="t" style="top:547.30px;font-size:13px;color:#000;-webkit-text-stroke:0.2px #000;right:39.23px;">0.00</div>
<div class="t" style="top:547.30px;font-size:13px;color:#000;-webkit-text-stroke:0.2px #000;left:1475.66px;">ML</div>
<div class="t" style="top:547.30px;font-size:13px;color:#000;-webkit-text-stroke:0.2px #000;left:1548.08px;">30.00</div>
<svg style="position:absolute;left:0;top:0" width="1901" height="623"><defs><filter id="sh" x="-20%" y="-20%" width="140%" height="140%"><feGaussianBlur in="SourceGraphic" stdDeviation="1.7" result="blur"/><feOffset in="blur" dy="2.6" result="off"/><feColorMatrix in="off" type="matrix" values="0 0 0 0 0.2  0 0 0 0 0.2  0 0 0 0 0.2  0 0 0 0.38 0" result="shadow"/><feMerge><feMergeNode in="shadow"/><feMergeNode in="SourceGraphic"/></feMerge></filter></defs><rect x="3.9" y="385.6" width="125.9" height="64.3" rx="16" fill="none" stroke="#fa2f17" stroke-width="2.4" filter="url(#sh)"/><rect x="539.9" y="159.9" width="222.1" height="42.7" rx="20" fill="none" stroke="#fa2f17" stroke-width="2.4" filter="url(#sh)"/><rect x="856.8" y="164.7" width="229.7" height="36.6" rx="18" fill="none" stroke="#fa2f17" stroke-width="2.4" filter="url(#sh)"/><rect x="883.0" y="395.3" width="203.0" height="39.9" rx="19" fill="none" stroke="#fa2f17" stroke-width="2.4" filter="url(#sh)"/><rect x="388.1" y="471.6" width="108.0" height="49.9" rx="22" fill="none" stroke="#fa2f17" stroke-width="2.4" filter="url(#sh)"/><rect x="998.8" y="470.3" width="73.0" height="104.1" rx="20" fill="none" stroke="#fa2f17" stroke-width="2.4" filter="url(#sh)"/></svg>
</div></body></html>
